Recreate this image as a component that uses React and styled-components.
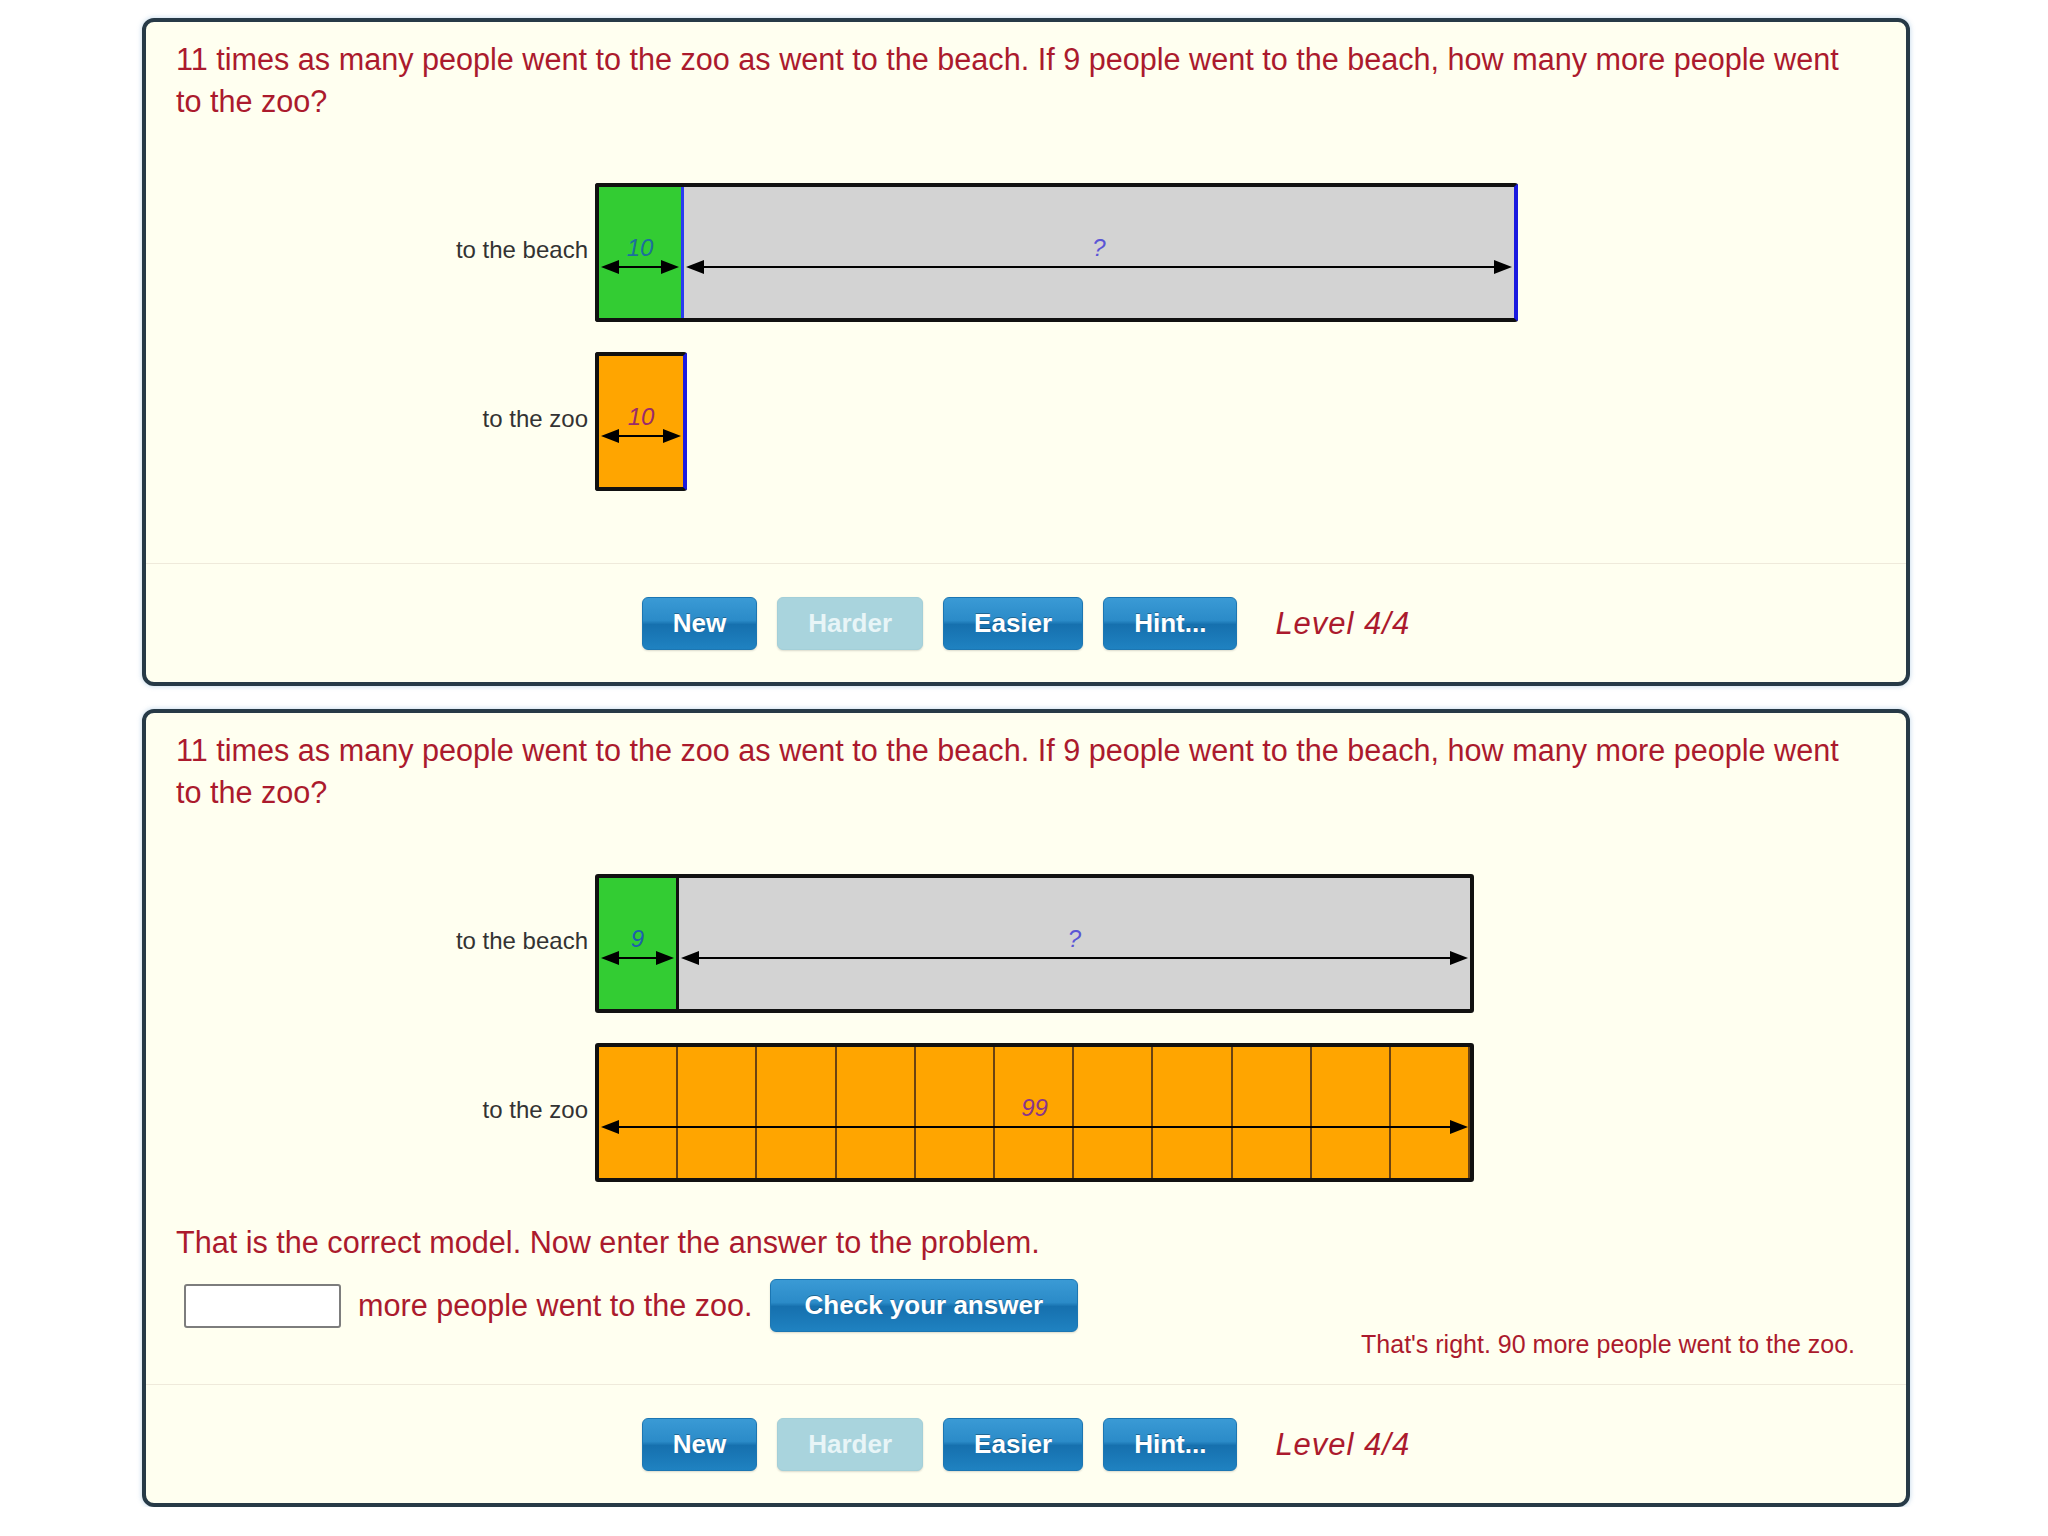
import React from "react";
import styled, { createGlobalStyle } from "styled-components";

const GlobalStyle = createGlobalStyle`
  body {
    margin: 0;
    background: #ffffff;
    font-family: "Liberation Sans", Arial, sans-serif;
  }
`;

const Page = styled.div`
  display: flex;
  flex-direction: column;
  gap: 23px;
  padding: 18px 0 0 142px;
`;

const Panel = styled.section`
  box-sizing: border-box;
  width: 1768px;
  background: #fffff0;
  border: 4px solid #273a47;
  border-radius: 12px;
  box-shadow: 0 0 4px 1px rgba(120, 170, 210, 0.35);
`;

const Body = styled.div`
  padding: 16px 30px 0;
`;

const Question = styled.p`
  max-width: 1670px;
  margin: 0;
  font-size: 30.6px;
  line-height: 42px;
  color: #ab1a2d;
`;

const Diagram = styled.div`
  display: grid;
  grid-template-columns: 160px auto;
  column-gap: 7px;
  row-gap: 30px;
  align-items: center;
  justify-items: start;
  margin: 61px 0 ${(p) => p.$bottom}px 252px;
`;

const RowLabel = styled.div`
  justify-self: end;
  margin-bottom: 6px;
  font-size: 24px;
  color: #333;
`;

const Bar = styled.div`
  position: relative;
  display: flex;
  box-sizing: border-box;
  width: ${(p) => p.$w}px;
  height: 139px;
  border: 4px solid #111;
  border-right-color: ${(p) => p.$end || "#111"};
  border-radius: 3px;
  overflow: hidden;
`;

const Segment = styled.div`
  box-sizing: border-box;
  flex: ${(p) => (p.$w ? `0 0 ${p.$w}px` : "1 1 0")};
  background: ${(p) => p.$bg};
  border-right: ${(p) => (p.$divider ? `3px solid ${p.$divider}` : "none")};
  display: flex;
  flex-direction: column;
  align-items: stretch;
  padding: 48px 2px 0 2px;
`;

const Cell = styled.div`
  flex: 1 1 0;
  background: #ffa500;
  border-right: 2px solid #6b4312;
  &:last-child {
    border-right: none;
  }
`;

const Overlay = styled.div`
  position: absolute;
  inset: 0;
  display: flex;
  flex-direction: column;
  padding: 48px 2px 0 2px;
`;

const Amount = styled.div`
  text-align: center;
  font-size: 24px;
  line-height: 26px;
  font-style: italic;
  color: ${(p) => p.$color};
`;

const Arrow = styled.div`
  display: flex;
  align-items: center;
  height: 14px;
  margin-top: -1px;
`;

const Head = styled.span`
  width: 0;
  height: 0;
  border-top: 7px solid transparent;
  border-bottom: 7px solid transparent;
  ${(p) =>
    p.$dir === "left"
      ? "border-right: 18px solid #000;"
      : "border-left: 18px solid #000;"}
`;

const Shaft = styled.span`
  flex: 1;
  height: 2px;
  background: ${(p) => p.$color || "#000"};
`;

const Feedback = styled.p`
  margin: 0;
  font-size: 30.6px;
  line-height: 42px;
  color: #ab1a2d;
`;

const AnswerRow = styled.div`
  display: flex;
  align-items: center;
  gap: 17px;
  margin-top: 16px;
  padding-left: 8px;
`;

const AnswerInput = styled.input`
  box-sizing: border-box;
  width: 157px;
  height: 44px;
  border: 2px solid #7d7d7d;
  border-radius: 3px;
  background: #fff;
`;

const AnswerText = styled.span`
  font-size: 30.6px;
  color: #ab1a2d;
`;

const Verdict = styled.div`
  margin: -2px 21px 26px 0;
  text-align: right;
  font-size: 25px;
  line-height: 28px;
  color: #ab1a2d;
`;

const Footer = styled.div`
  display: flex;
  justify-content: center;
  align-items: center;
  gap: 20px;
  padding: 33px 0 32px;
  border-top: 1px solid #efeadb;
`;

const Button = styled.button`
  box-sizing: border-box;
  height: 53px;
  padding: 0 ${(p) => p.$pad || 30}px;
  border: 1px solid ${(p) => (p.disabled ? "#a3cfd8" : "#1c76b2")};
  border-radius: 6px;
  background: ${(p) =>
    p.disabled
      ? "#a9d4dd"
      : "linear-gradient(to bottom, #3a9ad5 0%, #2b8bc8 44%, #1670ae 52%, #1f82c1 100%)"};
  color: ${(p) => (p.disabled ? "#e8f5f7" : "#ffffff")};
  font-family: "Liberation Sans", Arial, sans-serif;
  font-weight: bold;
  font-size: 26px;
  text-shadow: ${(p) => (p.disabled ? "none" : "0 -1px 0 rgba(0, 0, 0, 0.3)")};
  box-shadow: 0 1px 2px rgba(0, 0, 0, 0.15);
`;

const Level = styled.span`
  margin-left: 18px;
  font-size: 31px;
  letter-spacing: 1px;
  font-style: italic;
  color: #ab1a2d;
`;

const QUESTION =
  "11 times as many people went to the zoo as went to the beach. If 9 people went to the beach, how many more people went to the zoo?";

function Measure({ label, color }) {
  return (
    <>
      <Amount $color={color}>{label}</Amount>
      <Arrow>
        <Head $dir="left" />
        <Shaft />
        <Head $dir="right" />
      </Arrow>
    </>
  );
}

function Controls() {
  return (
    <Footer>
      <Button>New</Button>
      <Button disabled>Harder</Button>
      <Button>Easier</Button>
      <Button>Hint...</Button>
      <Level>Level 4/4</Level>
    </Footer>
  );
}

export default function App() {
  return (
    <>
      <GlobalStyle />
      <Page>
        <Panel>
          <Body>
            <Question>{QUESTION}</Question>
            <Diagram $bottom={72}>
              <RowLabel>to the beach</RowLabel>
              <Bar $w={923} $end="#1a1adf">
                <Segment $w={85} $bg="#33cc33" $divider="#2b3cf0">
                  <Measure label="10" color="#1c6f9c" />
                </Segment>
                <Segment $bg="#d3d3d3">
                  <Measure label="?" color="#5b55d6" />
                </Segment>
              </Bar>
              <RowLabel>to the zoo</RowLabel>
              <Bar $w={92} $end="#1a1adf">
                <Segment $bg="#ffa500">
                  <Measure label="10" color="#9a2b6b" />
                </Segment>
              </Bar>
            </Diagram>
          </Body>
          <Controls />
        </Panel>

        <Panel>
          <Body>
            <Question>{QUESTION}</Question>
            <Diagram $bottom={39}>
              <RowLabel>to the beach</RowLabel>
              <Bar $w={879}>
                <Segment $w={80} $bg="#33cc33" $divider="#111">
                  <Measure label="9" color="#1d5fae" />
                </Segment>
                <Segment $bg="#d3d3d3">
                  <Measure label="?" color="#5b55d6" />
                </Segment>
              </Bar>
              <RowLabel>to the zoo</RowLabel>
              <Bar $w={879}>
                {Array.from({ length: 11 }, (_, i) => (
                  <Cell key={i} />
                ))}
                <Overlay>
                  <Measure label="99" color="#8a358a" />
                </Overlay>
              </Bar>
            </Diagram>
            <Feedback>
              That is the correct model. Now enter the answer to the problem.
            </Feedback>
            <AnswerRow>
              <AnswerInput type="text" />
              <AnswerText>more people went to the zoo.</AnswerText>
              <Button $pad={34}>Check your answer</Button>
            </AnswerRow>
            <Verdict>That's right. 90 more people went to the zoo.</Verdict>
          </Body>
          <Controls />
        </Panel>
      </Page>
    </>
  );
}
